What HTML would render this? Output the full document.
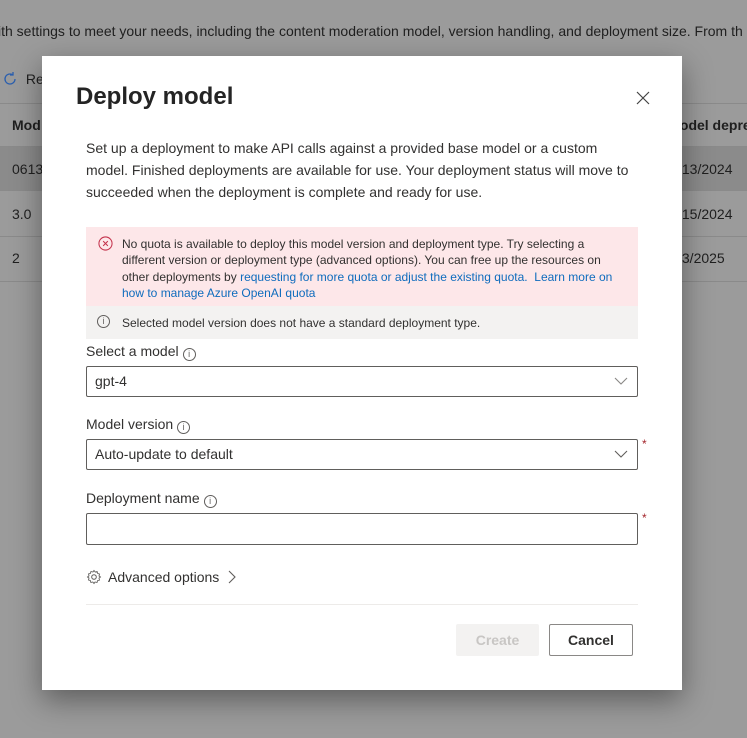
<!DOCTYPE html>
<html><head><style>
*{box-sizing:border-box;margin:0;padding:0}
body{width:747px;height:738px;overflow:hidden;background:#9b9b9b;font-family:"Liberation Sans",sans-serif;color:#323130;position:relative}
.bg{position:absolute;font-size:14px;color:#1f1f1f;white-space:nowrap}
.row{position:absolute;left:0;width:747px;border-top:1px solid #8a8a8a}
.modal{position:absolute;left:42px;top:56px;width:640px;height:634px;background:#fff;box-shadow:0 10px 28px rgba(0,0,0,.4)}
.abs{position:absolute}
.lbl{position:absolute;left:44px;font-size:14px;color:#323130}
.info{display:inline-block;width:13px;height:13px;border:1px solid #605e5c;border-radius:50%;font-size:9px;text-align:center;line-height:11px;vertical-align:-1px;margin-left:4px;color:#605e5c}
.dd{position:absolute;left:44px;width:552px;height:31px;border:1px solid #605e5c;border-radius:2px;font-size:14px;padding:6px 8px}
.dd svg{position:absolute;right:9px;top:10px}
.req{position:absolute;left:600px;color:#a4262c;font-size:12px}
a{color:#0f6cbd;text-decoration:none}
</style></head><body>
<div class="bg" style="left:-2px;top:23px">ith settings to meet your needs, including the content moderation model, version handling, and deployment size. From th</div>
<div class="bg" style="left:2px;top:71px"><svg width="16" height="16" viewBox="0 0 16 16" style="vertical-align:-3px"><path d="M13 8a5 5 0 1 1-2-4" fill="none" stroke="#2b5fae" stroke-width="1.3"/><path d="M11 1v3h-3" fill="none" stroke="#2b5fae" stroke-width="1.3"/></svg> <span style="margin-left:4px">Re</span></div>
<div class="row" style="top:103px;height:43px"></div>
<div class="bg" style="left:12px;top:117px;font-weight:bold">Mod</div>
<div class="bg" style="left:676px;top:117px;font-weight:bold">lodel depre</div>
<div class="row" style="top:146px;height:44px;background:#8b8b8b"></div>
<div class="bg" style="left:12px;top:161px">0613</div><div class="bg" style="left:678px;top:161px">/13/2024</div>
<div class="row" style="top:190px;height:46px"></div>
<div class="bg" style="left:12px;top:206px">3.0</div><div class="bg" style="left:678px;top:206px">/15/2024</div>
<div class="row" style="top:236px;height:46px"></div>
<div class="row" style="top:281px;height:1px"></div>
<div class="bg" style="left:12px;top:250px">2</div><div class="bg" style="left:678px;top:250px">/3/2025</div>

<div class="modal">
<div class="abs" style="left:34px;top:27px;font-size:24px;font-weight:600;color:#242424">Deploy model</div>
<svg class="abs" style="left:594px;top:35px" width="14" height="14" viewBox="0 0 14 14"><path d="M1 1L13 13M13 1L1 13" stroke="#444" stroke-width="1.2"/></svg>
<div class="abs" style="left:44px;top:81px;width:548px;font-size:14px;line-height:22px;color:#323130">Set up a deployment to make API calls against a provided base model or a custom model. Finished deployments are available for use. Your deployment status will move to succeeded when the deployment is complete and ready for use.</div>
<div class="abs" style="left:44px;top:171px;width:552px;height:79px;background:#fde7e9;padding:9px 8px 0 36px;font-size:12px;line-height:16.3px;color:#323130">
<svg class="abs" style="left:12px;top:9px" width="15" height="15" viewBox="0 0 16 16"><circle cx="8" cy="8" r="7" fill="none" stroke="#c4314b" stroke-width="1.1"/><path d="M5.5 5.5l5 5M10.5 5.5l-5 5" stroke="#c4314b" stroke-width="1.1"/></svg>
No quota is available to deploy this model version and deployment type. Try selecting a different version or deployment type (advanced options). You can free up the resources on other deployments by <a>requesting for more quota or adjust the existing quota.</a>&nbsp; <a>Learn more on how to manage Azure OpenAI quota</a></div>
<div class="abs" style="left:44px;top:250px;width:552px;height:33px;background:#f3f2f1;padding:10px 0 0 36px;font-size:12px;color:#323130">
<span class="info abs" style="left:11px;top:9px;margin:0">i</span>Selected model version does not have a standard deployment type.</div>
<div class="lbl" style="top:287px">Select a model<span class="info">i</span></div>
<div class="dd" style="top:310px">gpt-4<svg width="14" height="8" viewBox="0 0 14 8"><path d="M1 1l6 6 6-6" fill="none" stroke="#8a8886" stroke-width="1.1"/></svg></div>
<div class="lbl" style="top:360px">Model version<span class="info">i</span></div>
<div class="dd" style="top:383px">Auto-update to default<svg width="14" height="8" viewBox="0 0 14 8"><path d="M1 1l6 6 6-6" fill="none" stroke="#605e5c" stroke-width="1.1"/></svg></div>
<div class="req" style="top:381px">*</div>
<div class="lbl" style="top:434px">Deployment name<span class="info">i</span></div>
<div class="dd" style="top:457px;height:32px"></div>
<div class="req" style="top:455px">*</div>
<div class="lbl" style="top:513px;color:#323130"><svg width="16" height="16" viewBox="0 0 16 16" style="vertical-align:-3px;margin-right:6px"><circle cx="8" cy="8" r="2.3" fill="none" stroke="#605e5c"/><path d="M8 1.5l1.2 1.5 1.9-.5.5 1.9 1.9.6-.5 1.9L14.5 8l-1.5 1.2.5 1.9-1.9.5-.6 1.9-1.9-.5L8 14.5l-1.2-1.5-1.9.5-.5-1.9-1.9-.6.5-1.9L1.5 8l1.5-1.2-.5-1.9 1.9-.5.6-1.9 1.9.5z" fill="none" stroke="#605e5c" stroke-width="0.9"/></svg>Advanced options<svg width="10" height="14" viewBox="0 0 10 14" style="vertical-align:-2px;margin-left:8px"><path d="M2 1l6 6-6 6" fill="none" stroke="#605e5c" stroke-width="1.1"/></svg></div>
<div class="abs" style="left:44px;top:548px;width:552px;height:1px;background:#edebe9"></div>
<div class="abs" style="left:414px;top:568px;width:83px;height:32px;background:#f3f2f1;border-radius:2px;color:#c8c6c4;font-size:14px;text-align:center;line-height:32px;font-weight:600">Create</div>
<div class="abs" style="left:507px;top:568px;width:84px;height:32px;border:1px solid #8a8886;border-radius:2px;color:#323130;font-size:14px;text-align:center;line-height:30px;font-weight:600">Cancel</div>
</div>
</body></html>
